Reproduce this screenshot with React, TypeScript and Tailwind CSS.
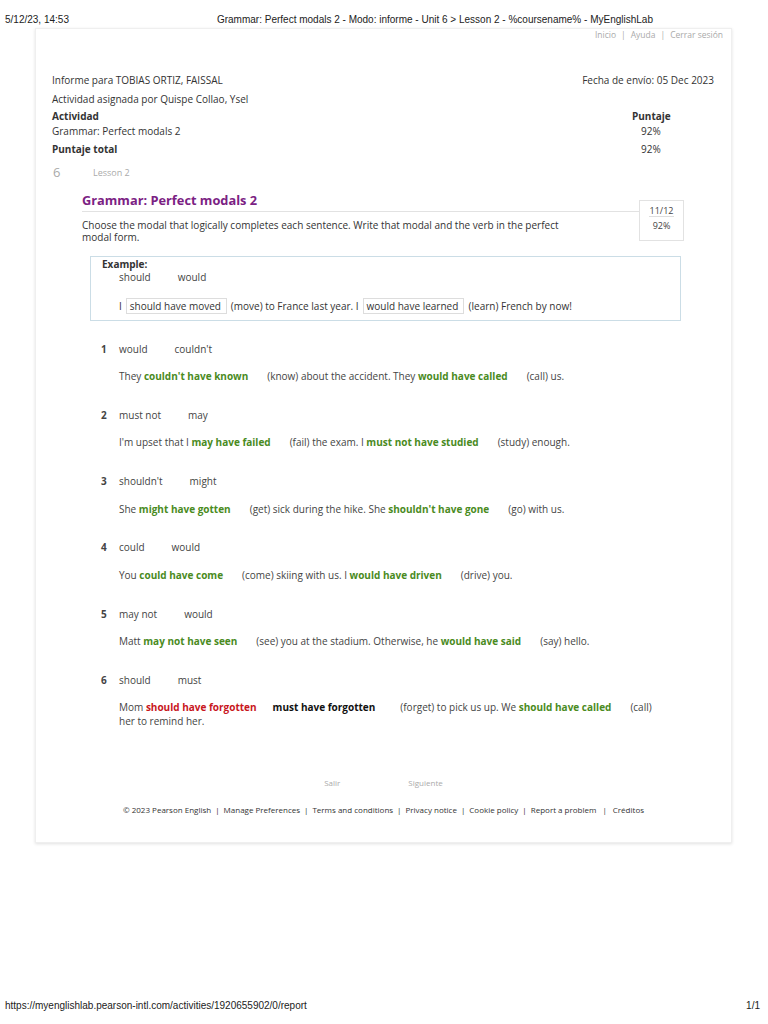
import React from "react";

function G({ children, mr = "mr-[19px]" }: { children: React.ReactNode; mr?: string }) {
  return <span className={`font-bold text-[#4a8b1e] ${mr}`}>{children}</span>;
}

function Item({ n, a, b, children }: { n: number; a: string; b: string; children: React.ReactNode }) {
  return (
    <div className="pt-[11px] pb-[14.3px]">
      <div className="flex items-center h-[14px]">
        <span className="w-[18px] font-bold text-[#444]">{n}</span>
        <span className="mr-[27px]">{a}</span>
        <span>{b}</span>
      </div>
      <div className="pl-[18px] mt-[13px] leading-[14px] pr-[22px]">{children}</div>
    </div>
  );
}

export default function App() {
  return (
    <div className="w-[768px] h-[1024px] bg-white relative overflow-hidden">
      <div className="flex items-center h-[14px] mt-[12px] px-[5px] text-[10px] text-[#222]" style={{ fontFamily: '"Liberation Sans", Arial, sans-serif' }}>
        <span>5/12/23, 14:53</span>
        <span className="ml-[148px]">Grammar: Perfect modals 2 - Modo: informe - Unit 6 &gt; Lesson 2 - %coursename% - MyEnglishLab</span>
      </div>

      <div
        className="ml-[35px] w-[697px] mt-[2px] border border-[#efefef] shadow-[0_1px_3px_rgba(0,0,0,0.12)] text-[10px] text-[#444]"
        style={{ fontFamily: '"Open Sans", "Noto Sans", sans-serif' }}
      >
        <div className="flex justify-end pr-[8px] pt-[1px] text-[8.5px] text-[#aaa] h-[12px] items-center">
          <span>Inicio</span>
          <span className="mx-[5px]">|</span>
          <span>Ayuda</span>
          <span className="mx-[5px]">|</span>
          <span>Cerrar sesión</span>
        </div>

        <div className="pl-[16px] pr-[17px] mt-[32px] text-[#333]">
          <div className="flex justify-between h-[14px] items-center">
            <span>Informe para TOBIAS ORTIZ, FAISSAL</span>
            <span>Fecha de envío: 05 Dec 2023</span>
          </div>
          <div className="h-[14px] flex items-center mt-[5px]">Actividad asignada por Quispe Collao, Ysel</div>
          <div className="flex h-[14px] items-center mt-[3px] font-bold">
            <span className="flex-1">Actividad</span>
            <span className="w-[82px] text-left">Puntaje</span>
          </div>
          <div className="flex h-[14px] items-center mt-[1px]">
            <span className="flex-1">Grammar: Perfect modals 2</span>
            <span className="w-[82px] pl-[9px]">92%</span>
          </div>
          <div className="flex h-[14px] items-center mt-[4px] font-bold">
            <span className="flex-1">Puntaje total</span>
            <span className="w-[82px] pl-[9px] font-normal">92%</span>
          </div>
          <div className="flex items-center h-[16px] mt-[9px] text-[#aaa]">
            <span className="text-[13px] w-[41px] pl-[1px]">6</span>
            <span className="text-[9px]">Lesson 2</span>
          </div>
        </div>

        <div className="ml-[46px] mr-[47px] mt-[11px]">
          <div className="flex items-start">
            <div className="flex-1">
              <div className="text-[12.8px] font-bold text-[#7b2183] border-b border-[#e2e2e2] pb-[3px] leading-[16px]">
                Grammar: Perfect modals 2
              </div>
              <div className="pt-[7px] pr-[50px] leading-[12px] text-[#333]">
                Choose the modal that logically completes each sentence. Write that modal and the verb in the perfect modal form.
              </div>
            </div>
            <div className="w-[45px] h-[41px] mt-[8px] border border-[#e2e2e2] flex flex-col items-center text-[#444] text-[9px]">
              <div className="mt-[4px] h-[12px] leading-[12px] pb-[1px] border-b border-[#dedede] px-[1px]">11/12</div>
              <div className="mt-[3px] h-[12px] leading-[12px]">92%</div>
            </div>
          </div>

          <div className="ml-[8px] mr-[3px] mt-[13px] border border-[#cbdde6] pl-[11px] pt-[1px] pb-[6px]">
            <div className="font-bold text-[#333] h-[13px] leading-[13px]">Example:</div>
            <div className="flex pl-[17px] h-[13px] leading-[13px]">
              <span className="mr-[27px]">should</span>
              <span>would</span>
            </div>
            <div className="flex items-center pl-[17px] mt-[14px] text-[#333]">
              <span>I</span>
              <span className="ml-[4px] border border-[#ddd] px-[3px] h-[16px] leading-[14px] w-[101px]">should have moved</span>
              <span className="ml-[4px]">(move) to France last year. I</span>
              <span className="ml-[4px] border border-[#ddd] px-[3px] h-[16px] leading-[14px] w-[101px]">would have learned</span>
              <span className="ml-[5px]">(learn) French by now!</span>
            </div>
          </div>

          <div className="pl-[19px] mt-[10px]">
            <Item n={1} a="would" b="couldn't">
              They <G>couldn't have known</G>(know) about the accident. They <G>would have called</G>(call) us.
            </Item>
            <Item n={2} a="must not" b="may">
              I'm upset that I <G>may have failed</G>(fail) the exam. I <G>must not have studied</G>(study) enough.
            </Item>
            <Item n={3} a="shouldn't" b="might">
              She <G>might have gotten</G>(get) sick during the hike. She <G>shouldn't have gone</G>(go) with us.
            </Item>
            <Item n={4} a="could" b="would">
              You <G>could have come</G>(come) skiing with us. I <G>would have driven</G>(drive) you.
            </Item>
            <Item n={5} a="may not" b="would">
              Matt <G>may not have seen</G>(see) you at the stadium. Otherwise, he <G>would have said</G>(say) hello.
            </Item>
            <Item n={6} a="should" b="must">
              <span>Mom </span>
              <span className="font-bold text-[#c8161d] mr-[16px]">should have forgotten</span>
              <span className="font-bold text-[#111] mr-[25px]">must have forgotten</span>
              <span>(forget) to pick us up. We </span>
              <G>should have called</G>
              <span>(call)</span> <span>her to remind her.</span>
            </Item>
          </div>
        </div>

        <div className="flex justify-center mt-[34px] text-[8px] text-[#aaa] h-[12px] items-center">
          <span className="mr-[68px]">Salir</span>
          <span>Siguiente</span>
        </div>
        <div className="flex justify-center mt-[15px] text-[8px] text-[#333] h-[12px] items-center mb-[26px]">
          <span>© 2023 Pearson English</span>
          <span className="mx-[4px]">|</span>
          <span>Manage Preferences</span>
          <span className="mx-[4px]">|</span>
          <span>Terms and conditions</span>
          <span className="mx-[4px]">|</span>
          <span>Privacy notice</span>
          <span className="mx-[4px]">|</span>
          <span>Cookie policy</span>
          <span className="mx-[4px]">|</span>
          <span>Report a problem</span>
          <span className="mx-[6px]">|</span>
          <span>Créditos</span>
        </div>
      </div>

      <div
        className="absolute left-0 right-0 top-[998px] flex justify-between px-[5px] pr-[8px] text-[10px] text-[#222]"
        style={{ fontFamily: '"Liberation Sans", Arial, sans-serif' }}
      >
        <span>https://myenglishlab.pearson-intl.com/activities/1920655902/0/report</span>
        <span>1/1</span>
      </div>
    </div>
  );
}
